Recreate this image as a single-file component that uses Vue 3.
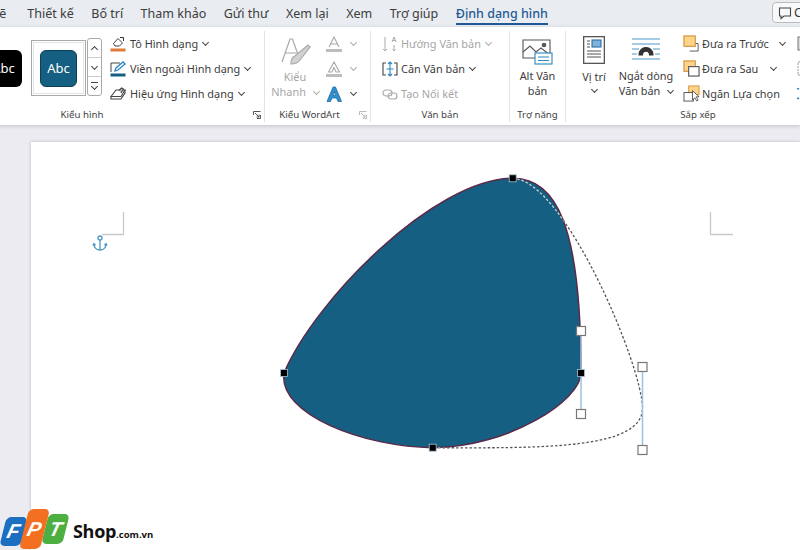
<template>
  <div class="app">
    <div class="tabs">
      <span v-for="t in tabs" :key="t" class="tab">{{ t }}</span>
      <span class="tab active">Định dạng hình</span>
      <div class="comment-btn">
        <svg width="14" height="14" viewBox="0 0 14 14" fill="none" stroke="#444" stroke-width="1.1"><path d="M1.5 2h11v8H6l-3 2.5V10H1.5z" /></svg>
        <span>Chú thích</span>
      </div>
    </div>

    <div class="ribbon">
      <div class="group g-styles">
        <div class="body">
          <div class="gallery">
            <div class="tile black">Abc</div>
            <div class="tile-frame"><div class="tile blue">Abc</div></div>
          </div>
          <div class="spin">
            <span class="spin-btn"><i class="chev up"></i></span>
            <span class="spin-btn"><i class="chev"></i></span>
            <span class="spin-btn more"><i class="bar"></i><i class="chev"></i></span>
          </div>
          <div class="rows">
            <div class="row">
              <svg class="ico" viewBox="0 0 16 16" fill="none" stroke="#444" stroke-width="1"><path d="M3.500 7.500 8 2.500l4.500 4.500-3 3H5z" /><path d="M10 1.500h3.500v3.500" stroke="#333" /><rect x="0.500" y="12.500" width="15" height="3" fill="#e07b39" stroke="none" /></svg>
              <span>Tô Hình dạng</span><i class="chev"></i>
            </div>
            <div class="row">
              <svg class="ico" viewBox="0 0 16 16" fill="none" stroke="#444" stroke-width="1"><path d="M1 11V2h9" /><path d="M5 10l1-3 7-6 2 2-7 6z" fill="#fff" stroke="#2a86c0" stroke-width="1.300" /><rect x="0.500" y="12.500" width="15" height="3" fill="#156082" stroke="none" /></svg>
              <span>Viền ngoài Hình dạng</span><i class="chev"></i>
            </div>
            <div class="row">
              <svg class="ico" viewBox="0 0 16 16" fill="none" stroke="#444" stroke-width="1.100"><path d="M1 10.500 6 4h9l-4 6.500z" fill="#fff" /><path d="M1 10.500V13h10l4-6V4" /><path d="M9 4.500 11.500 2l2 1-2.500 4" fill="#bbb" /></svg>
              <span>Hiệu ứng Hình dạng</span><i class="chev"></i>
            </div>
          </div>
        </div>
        <div class="label">
          Kiểu hình
          <svg class="launcher" viewBox="0 0 8 8" fill="none" stroke="#555"><path d="M7.500 4V7.500H4M0.500 4V0.500H7.500M2 2l4 4M6 3.500V6H3.500" /></svg>
        </div>
      </div>

      <div class="group g-wordart">
        <div class="body">
          <div class="big quick muted">
            <svg class="quick-ico" width="30" height="27" viewBox="0 0 30 27" fill="none" stroke="#a8a8a8" stroke-width="1.200"><path d="M1 24 9 1h2.500l7 20M4.500 15h11" /><path d="M10 26c0-4 1-7 4-8l13-11 2 2-10 13c-2 3-6 4-9 4z" fill="#d2d2d2" /></svg>
            <span>Kiểu</span>
            <span>Nhanh <i class="chev"></i></span>
          </div>
          <div class="wa-col">
            <div class="wa-row muted">
              <svg class="ico" viewBox="0 0 18 16" fill="none" stroke="#a8a8a8" stroke-width="1.100"><path d="M4 11 9 1l5 10M6 8h6" /><rect x="1" y="13" width="16" height="3" fill="#bdbdbd" stroke="none" /></svg>
              <i class="chev"></i>
            </div>
            <div class="wa-row muted">
              <svg class="ico" viewBox="0 0 18 16" fill="none" stroke="#a8a8a8" stroke-width="1.100"><path d="M3.500 11 9 1l5.500 10H11L9 6.500 7 11z" /><rect x="1" y="13" width="16" height="3" fill="#bdbdbd" stroke="none" /></svg>
              <i class="chev"></i>
            </div>
            <div class="wa-row">
              <svg class="ico" viewBox="0 0 18 16" fill="#2f8fd0" stroke="#17609a" stroke-width="0.700"><path d="M2 15.500 8 1h2.500l6 14.500h-3.500L11.500 12h-4.500L5.500 15.500zM8 9.500h2.500L9.300 5.500z" fill-rule="evenodd" /></svg>
              <i class="chev"></i>
            </div>
          </div>
        </div>
        <div class="label">
          Kiểu WordArt
          <svg class="launcher" viewBox="0 0 8 8" fill="none" stroke="#bbb"><path d="M7.500 4V7.500H4M0.500 4V0.500H7.500M2 2l4 4M6 3.500V6H3.500" /></svg>
        </div>
      </div>

      <div class="group g-text">
        <div class="rows">
          <div class="row muted">
            <svg class="ico" viewBox="0 0 16 16" fill="none" stroke="#aaa" stroke-width="1"><path d="M3 1v14M1 13l2 2 2-2M10 6l2-5 2 5M10.500 4.500h3M12 9v6M10.500 13.500 12 15l1.500-1.500" /></svg>
            <span>Hướng Văn bản</span><i class="chev"></i>
          </div>
          <div class="row">
            <svg class="ico" viewBox="0 0 16 16" fill="none" stroke="#444" stroke-width="1.100"><path d="M4 2H1v12h3M12 2h3v12h-3" /><path d="M8 1v14M6 3l2-2 2 2M6 13l2 2 2-2M4.500 8h7" stroke="#2a86c0" /></svg>
            <span>Căn Văn bản</span><i class="chev"></i>
          </div>
          <div class="row muted">
            <svg class="ico" viewBox="0 0 16 16" fill="none" stroke="#aaa" stroke-width="1.200"><rect x="1" y="4" width="9" height="6" rx="3" /><rect x="6" y="7" width="9" height="6" rx="3" /></svg>
            <span>Tạo Nối kết</span>
          </div>
        </div>
        <div class="label">Văn bản</div>
      </div>

      <div class="group g-access">
        <div class="big">
          <svg width="31" height="26" viewBox="0 0 31 26" fill="none" stroke="#555" stroke-width="1.100"><path d="M1 1h27v18H1z" /><path d="M1 13l7-6 6 6 5-4 9 7" /><circle cx="22" cy="6" r="1.800" fill="#555" /><rect x="13" y="14" width="17" height="11" fill="#fff" stroke="#2a86c0" /><path d="M16 18h11M16 21.500h11" stroke="#2a86c0" /></svg>
          <span>Alt Văn</span>
          <span>bản</span>
        </div>
        <div class="label">Trợ năng</div>
      </div>

      <div class="group g-arrange">
        <div class="body">
          <div class="big pos">
            <svg width="22" height="28" viewBox="0 0 22 28" fill="none" stroke="#555" stroke-width="1.100"><rect x="0.600" y="0.600" width="20.800" height="26.800" stroke-width="1.400" /><rect x="9" y="4" width="9" height="7" fill="#7fb2dc" stroke="#2a6ea6" /><path d="M4 5h3M4 8h3M4 11h3M4 15h14M4 18h14M4 21h14" /></svg>
            <span>Vị trí</span>
            <i class="chev"></i>
          </div>
          <div class="big wrap">
            <svg width="28" height="24" viewBox="0 0 28 24" fill="none" stroke="#4a9bc9" stroke-width="1.100"><path d="M0 1h28M0 6h28M0 11h7M21 11h7M0 16h5M23 16h5M0 21h28" /><path d="M7 17c0-10 14-10 14 0h-3.500c0-5-7-5-7 0z" fill="#333" stroke="#333" /></svg>
            <span>Ngắt dòng</span>
            <span>Văn bản <i class="chev"></i></span>
          </div>
          <div class="rows arrange-rows">
            <div class="row">
              <svg class="ico" viewBox="0 0 18 18" fill="none"><path d="M7 9h9v8H7" stroke="#555" /><rect x="1" y="1" width="12" height="11" fill="#fbd38a" stroke="#d9923a" stroke-width="1.200" /></svg>
              <span class="w-front">Đưa ra Trước</span><i class="chev"></i>
            </div>
            <div class="row">
              <svg class="ico" viewBox="0 0 18 18" fill="none"><rect x="1" y="1" width="12" height="11" fill="#fbd38a" stroke="#d9923a" stroke-width="1.200" /><rect x="6" y="7" width="11" height="10" fill="#fff" stroke="#555" stroke-width="1.200" /></svg>
              <span class="w-back">Đưa ra Sau</span><i class="chev"></i>
            </div>
            <div class="row">
              <svg class="ico" viewBox="0 0 18 18" fill="none"><rect x="6" y="1" width="11" height="9" fill="#fbd38a" stroke="#d9923a" /><rect x="1" y="8" width="10" height="9" fill="#fff" stroke="#555" /><path d="M10 6v10l2.500-2.500 2 3.500 1.500-1-2-3.500h3z" fill="#fff" stroke="#333" stroke-width="0.800" /></svg>
              <span>Ngăn Lựa chọn</span>
            </div>
          </div>
          <div class="edge-icons">
            <svg width="14" height="15" viewBox="0 0 14 15" fill="none" stroke="#777"><rect x="1" y="1" width="11" height="13" fill="#ddd" /></svg>
            <svg width="14" height="15" viewBox="0 0 14 15" fill="none" stroke="#999" stroke-dasharray="2 1"><rect x="1" y="1" width="11" height="13" /></svg>
            <svg width="14" height="15" viewBox="0 0 14 15" fill="none" stroke="#2a86c0" stroke-width="1.500"><path d="M2 3a5 5 0 1 0 0 9" /></svg>
          </div>
        </div>
        <div class="label">Sắp xếp</div>
      </div>
    </div>

    <div class="canvas">
      <div class="page">
        <svg class="drawing" width="769" height="408" viewBox="31 142 769 408">
          <defs>
            <clipPath id="inside"><path :d="shape" /></clipPath>
          </defs>
          <path d="M123.500 212V234.500H102M710.500 212V234.500H733" fill="none" stroke="#c9c9c9" stroke-width="1.300" />
          <g fill="none" stroke="#4b97c4" stroke-width="1.300">
            <circle cx="100" cy="238" r="2" />
            <path d="M100 240V250M94 244c0 4 3 6 6 6s6-2 6-6M92.800 245.500 94 243.500l1.500 1.800M104.500 245.300 106 243.500l1.200 2" />
          </g>
          <path :d="shape" fill="#156082" stroke="#5a2a48" stroke-width="1.500" />
          <path :d="ghost" fill="none" stroke="#555" stroke-width="1.300" stroke-dasharray="2.500 2" />
          <path :d="ghost" fill="none" stroke="#c6d8e2" stroke-width="1.300" stroke-dasharray="2.500 2" clip-path="url(#inside)" />
          <path d="M581 331V414M642.500 367V450" fill="none" stroke="#9cc3de" stroke-width="1.500" />
          <rect v-for="h in handles" :key="h[0] + '-' + h[1]" :x="h[0] - 4.500" :y="h[1] - 4.500" width="9" height="9" fill="#fff" stroke="#777" stroke-width="1.200" />
          <rect v-for="n in nodes" :key="n[0] + '-' + n[1]" :x="n[0] - 3.500" :y="n[1] - 3.500" width="7" height="7" fill="#000" stroke="#a9c4d4" stroke-width="0.800" />
        </svg>
      </div>
    </div>

    <div class="brand">
      <div class="fpt">
        <span class="fpt-tile f">F</span>
        <span class="fpt-tile p">P</span>
        <span class="fpt-tile t">T</span>
      </div>
      <div class="shop">Shop<small>.com.vn</small></div>
    </div>
  </div>
</template>

<script setup>
const tabs = ['Vẽ', 'Thiết kế', 'Bố trí', 'Tham khảo', 'Gửi thư', 'Xem lại', 'Xem', 'Trợ giúp']

const shape = 'M512.700 178.300C556 178 581 225 581 373C581 400 510 447 432.700 447.700C365 447 278 415 284 373C315 300 434 179 512.700 178.300Z'
const ghost = 'M512.700 178.300C565 180 642.500 367 642.500 408C642.500 450 540 448 432.700 447.700'

const handles = [[581, 331], [581, 414], [642.5, 367], [642.5, 450]]
const nodes = [[512.7, 178.3], [284, 373], [432.7, 447.7], [581, 373]]
</script>

<style scoped>
.app {
  position: relative;
  width: 800px;
  height: 550px;
  overflow: hidden;
  display: flex;
  flex-direction: column;
  background: #ebebf1;
  font-family: "Noto Sans", "Open Sans", sans-serif;
  color: #3c3c3c;
}

/* tab strip */
.tabs {
  height: 27px;
  flex: none;
  display: flex;
  align-items: center;
  gap: 17.500px;
  margin-left: -8px;
  background: #e9ecf1;
  font-size: 12.500px;
  position: relative;
}
.tab { white-space: nowrap; line-height: 27px; }
.tab:first-child { margin-right: 3.500px; }
.tab.active {
  color: #1f5a96;
  font-weight: 500;
  position: relative;
}
.tab.active::after {
  content: "";
  position: absolute;
  left: 0;
  right: 0;
  bottom: 2px;
  height: 2px;
  background: #1f5a96;
}
.comment-btn {
  position: absolute;
  left: 780px;
  top: 2px;
  width: 110px;
  height: 21px;
  box-sizing: border-box;
  padding-left: 5px;
  display: flex;
  align-items: center;
  gap: 2px;
  border: 1px solid #bcbcbc;
  border-radius: 4px;
  background: #f8f9fa;
}

/* ribbon */
.ribbon {
  height: 98px;
  flex: none;
  display: flex;
  margin-left: -100px;
  background: #fff;
  box-shadow: 0 1px 4px rgba(0, 0, 0, 0.18);
  font-size: 10.900px;
  position: relative;
  z-index: 1;
  overflow: hidden;
}
.group {
  flex: none;
  box-sizing: border-box;
  height: 91px;
  margin-top: 4px;
  display: flex;
  flex-direction: column;
  border-right: 1px solid #e3e3e3;
}
.body { display: flex; flex: 1; min-height: 0; }
.label {
  position: relative;
  height: 15px;
  line-height: 15px;
  text-align: center;
  font-size: 9.700px;
  color: #444;
}
.launcher {
  position: absolute;
  right: 3px;
  top: 4px;
  width: 8px;
  height: 8px;
}
.rows { display: flex; flex-direction: column; flex: 1; min-height: 0; }
.row {
  height: 25px;
  flex: none;
  display: flex;
  align-items: center;
  white-space: nowrap;
}
.ico { width: 16px; height: 16px; margin-right: 4px; flex: none; }
.muted { color: #a6a6a6; }
.chev {
  display: inline-block;
  width: 4px;
  height: 4px;
  margin: 0 0 2px 5px;
  border-right: 1.200px solid #444;
  border-bottom: 1.200px solid #444;
  transform: rotate(45deg);
  flex: none;
}
.chev.up { transform: rotate(225deg); margin: 2px 0 0 0; }
.muted .chev { border-color: #aaa; }
.big {
  display: flex;
  flex-direction: column;
  align-items: center;
  line-height: 15px;
  white-space: nowrap;
}

/* shape styles */
.g-styles { width: 365px; }
.gallery {
  width: 186px;
  height: 56px;
  margin: 9px 0 0 0;
  display: flex;
  align-items: center;
  justify-content: flex-end;
  gap: 9px;
  flex: none;
}
.tile {
  width: 37px;
  height: 37px;
  border-radius: 6px;
  display: flex;
  align-items: center;
  justify-content: center;
  font-size: 13px;
  box-sizing: border-box;
}
.tile.black { background: #000; color: #fff; }
.tile.blue { background: #156082; color: #fff; border: 1px solid #0e3f56; }
.tile-frame {
  width: 55px;
  height: 56px;
  box-sizing: border-box;
  display: flex;
  align-items: center;
  justify-content: center;
  border: 1px solid #aaa;
  outline: 1px solid #e4e4e4;
  outline-offset: -3px;
}
.spin {
  width: 15px;
  height: 58px;
  margin: 7px 8px 0 1px;
  display: flex;
  flex-direction: column;
  border: 1px solid #aaa;
  border-radius: 3px;
  box-sizing: border-box;
  flex: none;
}
.spin-btn {
  flex: 1;
  display: flex;
  flex-direction: column;
  align-items: center;
  justify-content: center;
  border-bottom: 1px solid #ccc;
}
.spin-btn:last-child { border-bottom: 0; }
.spin-btn .chev { margin: 0 0 2px 0; }
.spin-btn .chev.up { margin: 2px 0 0 0; }
.spin .bar { width: 7px; height: 1px; background: #444; margin-bottom: 1px; }

/* wordart */
.g-wordart { width: 106px; }
.g-wordart .label { padding-right: 16px; }
.quick { width: 60px; padding-top: 7px; }
.quick-ico { margin-left: 2px; }
.quick span:first-of-type { margin-top: 3.500px; }
.wa-col { display: flex; flex-direction: column; }
.wa-row { height: 25px; display: flex; align-items: center; }
.wa-row .ico { width: 18px; margin-right: 3px; }

/* text */
.g-text { width: 139px; padding-left: 11px; }
.g-text .ico { margin-right: 3px; }
.g-text .label { margin-left: -11px; }

/* accessibility */
.g-access { width: 56px; }
.g-access .big { flex: 1; padding-top: 8px; }
.g-access .big span:first-of-type { margin-top: 3px; }

/* arrange */
.g-arrange { width: 264px; border-right: 0; }
.pos { width: 50px; padding-top: 5px; margin-left: 3px; }
.pos span { margin-top: 5px; }
.pos .chev { margin: 3px 0 0 0; }
.wrap { width: 58px; padding-top: 7px; margin-left: -2px; }
.wrap span:first-of-type { margin-top: 6px; }
.arrange-rows { margin-left: 8px; flex: none; width: 112px; }
.arrange-rows .ico { width: 17px; height: 17px; margin-right: 2px; }
.w-front { width: 73px; }
.w-back { width: 64px; }
.edge-icons {
  display: flex;
  flex-direction: column;
  gap: 10px;
  padding-top: 5px;
  margin-left: 2px;
}

/* document */
.canvas { flex: 1; min-height: 0; display: flex; padding: 17px 0 0 31px; }
.page {
  flex: 1;
  position: relative;
  background: #fff;
  box-shadow: 0 0 3px rgba(0, 0, 0, 0.22);
}
.drawing { position: absolute; left: 0; top: 0; }

/* watermark */
.brand {
  position: absolute;
  left: 3px;
  bottom: 0;
  height: 42px;
  display: flex;
  align-items: center;
  z-index: 2;
}
.fpt { display: flex; align-items: center; }
.fpt-tile {
  display: flex;
  align-items: center;
  justify-content: center;
  width: 21px;
  color: #fff;
  font-weight: 700;
  font-style: italic;
  font-size: 20px;
  font-family: "Liberation Sans", sans-serif;
  border-radius: 5px;
  transform: skewX(-14deg);
}
.fpt-tile.f { height: 29px; background: #1c6fc0; margin-top: 5px; }
.fpt-tile.p { height: 40px; background: #f37021; z-index: 1; }
.fpt-tile.t { height: 30px; background: #4caf3f; }
.shop {
  margin-left: 7px;
  margin-top: 4px;
  font-size: 18px;
  font-weight: 700;
  color: #111;
  font-family: "Open Sans", sans-serif;
  letter-spacing: -0.3px;
}
.shop small { font-size: 9.500px; letter-spacing: 0; }
</style>

<style>
html, body { background: #fff; }
</style>
